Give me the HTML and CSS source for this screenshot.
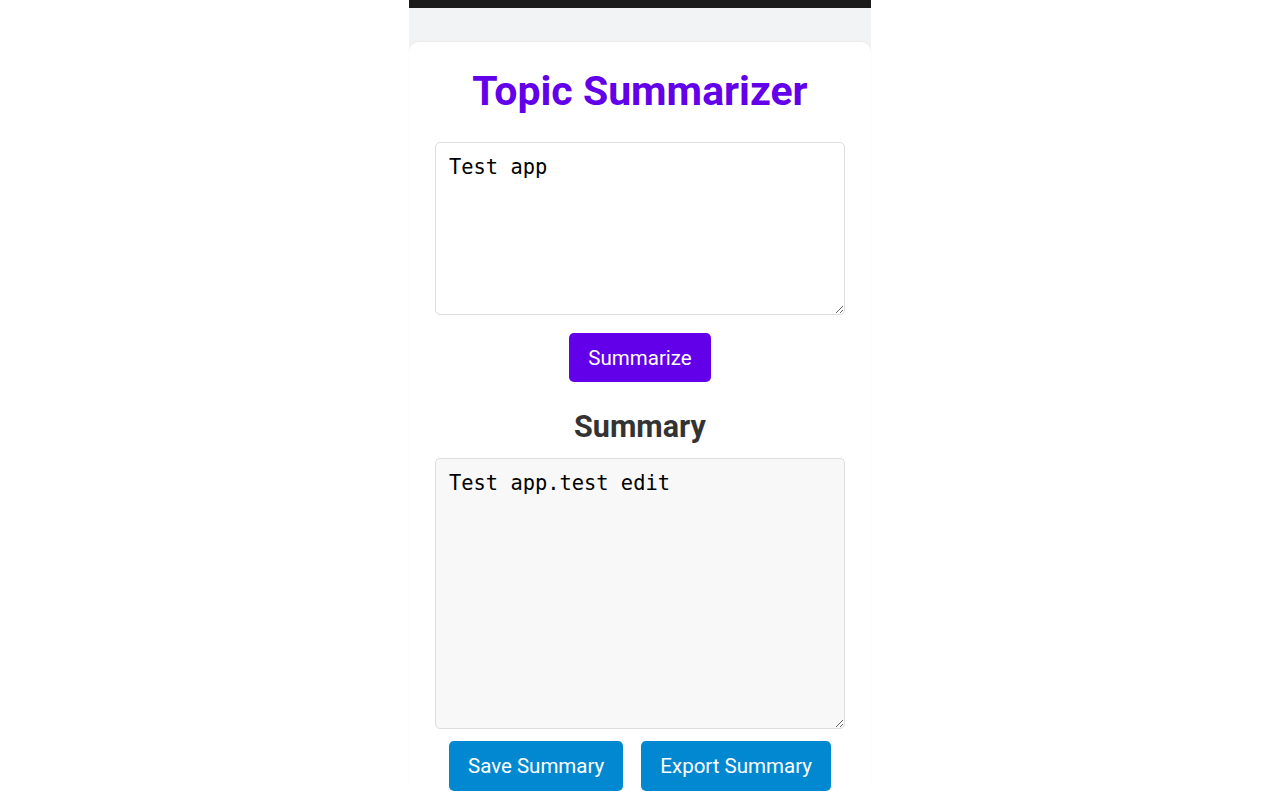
FILE: index.html
```html
<!DOCTYPE html>
<html lang="en">
<head>
    <meta charset="UTF-8">
    <meta name="viewport" content="width=device-width, initial-scale=1.0">
    <title>Topic Summarizer</title>
    <link rel="stylesheet" href="styles.css">
</head>
<body>
    <div class="app">
        <div class="status-bar"></div>
        <div class="container">
            <h1>Topic Summarizer</h1>

            <textarea id="topic" class="topic-input">Test app</textarea>
            <div class="actions">
                <button class="btn btn-primary" onclick="summarize()">Summarize</button>
            </div>

            <h2>Summary</h2>
            <textarea id="summary" class="summary-output">Test app.test edit</textarea>
            <div class="actions">
                <button class="btn btn-secondary">Save Summary</button>
                <button class="btn btn-secondary">Export Summary</button>
            </div>
        </div>
    </div>

    <script>
        function summarize() {
            const topic = document.getElementById('topic').value;
            document.getElementById('summary').value = topic.trim() + '.';
        }
    </script>
</body>
</html>
```

FILE: styles.css
```css
body {
    margin: 0;
    background: #fff;
    font-family: Roboto, 'Liberation Sans', sans-serif;
}
.app {
    width: 462px;
    margin: 0 auto;
    background: #f2f3f5;
}
.status-bar {
    height: 8px;
    background: #1b1b1b;
}
.container {
    margin-top: 34px;
    padding: 25px 26px 0;
    background: #fff;
    border-radius: 10px 10px 0 0;
    box-shadow: 0 -1px 2px rgba(0, 0, 0, 0.04);
    min-height: 740px;
    box-sizing: border-box;
    display: flex;
    flex-direction: column;
    align-items: center;
}
h1 {
    margin: 0 0 27px;
    font-size: 41px;
    line-height: 48px;
    font-weight: 700;
    color: #6200ea;
}
h2 {
    margin: 27px 0 13px;
    font-size: 30.5px;
    line-height: 36px;
    font-weight: 700;
    color: #333;
}
textarea {
    width: 410px;
    padding: 12px 13px;
    border: 1px solid #ddd;
    border-radius: 5px;
    box-sizing: border-box;
    font-family: 'DejaVu Sans Mono', monospace;
    font-size: 20.4px;
    color: #000;
}
.topic-input {
    height: 173px;
    background: #fff;
}
.summary-output {
    height: 271px;
    background: #f8f8f8;
}
.actions {
    display: flex;
    justify-content: center;
    gap: 18px;
}
.topic-input + .actions {
    margin-top: 18px;
}
.summary-output + .actions {
    margin-top: 12px;
}
.btn {
    height: 50px;
    padding: 0 19px;
    border: none;
    border-radius: 5px;
    color: #fff;
    font-family: Roboto, 'Liberation Sans', sans-serif;
    font-size: 20.5px;
    cursor: pointer;
}
.btn-primary {
    height: 49px;
    background: #6200ea;
}
.btn-secondary {
    background: #0288d1;
}
```
